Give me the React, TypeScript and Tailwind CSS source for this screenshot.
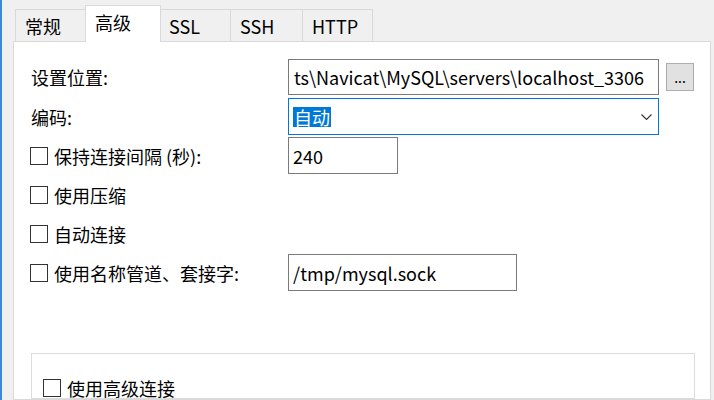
import React from "react";

const Checkbox = () => (
  <span className="inline-block w-[18px] h-[18px] border-[1.5px] border-[#333333] bg-white shrink-0" />
);

const Tab = ({ w, last, children }: { w: string; last?: boolean; children: React.ReactNode }) => (
  <div
    className={`${w} h-[32px] border-l border-t border-[#d9d9d9] ${last ? "border-r" : ""} bg-[#f0f0f0] pl-[9px] flex items-center shrink-0`}
  >
    {children}
  </div>
);

export default function App() {
  return (
    <div className="w-[714px] h-[400px] bg-[#f0f0f0] overflow-hidden border-l-2 border-[#3b8ad8] text-[18px] leading-none text-black font-['Noto_Sans_CJK_SC','Noto_Sans',sans-serif] flex flex-col">
      <div className="flex items-end h-[41px] pl-[13px] shrink-0">
        <Tab w="w-[70px]">常规</Tab>
        <div className="relative z-10 -mb-px w-[76px] h-[37px] bg-white border-x border-t border-[#d9d9d9] pl-[9px] pb-[4px] flex items-center shrink-0">
          高级
        </div>
        <div className="w-[69px] h-[32px] border-t border-[#d9d9d9] bg-[#f0f0f0] pl-[8px] flex items-center shrink-0">SSL</div>
        <Tab w="w-[72px]">SSH</Tab>
        <Tab w="w-[71px]" last>
          HTTP
        </Tab>
      </div>
      <div className="ml-[11px] w-[698px] flex-1 bg-white border border-[#d9d9d9] pt-[17px] pl-[17px] flex flex-col">
        {/* Row 1 */}
        <div className="flex items-center h-[36px]">
          <div className="w-[257px]">设置位置:</div>
          <div className="w-[371px] h-[36px] border border-[#7a7a7a] pl-[5px] flex items-center overflow-hidden whitespace-nowrap">
            {"ts\\Navicat\\MySQL\\servers\\localhost_3306"}
          </div>
          <div className="ml-[7px] w-[28px] h-[28px] bg-[#e1e1e1] border border-[#adadad] flex items-end justify-center pb-[6px] text-[14px]">
            ...
          </div>
        </div>
        {/* Row 2 */}
        <div className="flex items-center h-[37px] mt-[3px]">
          <div className="w-[257px]">编码:</div>
          <div className="w-[371px] h-[37px] border border-[#0078d7] pl-[4px] pr-[6px] flex items-center justify-between">
            <span className="bg-[#0078d7] text-white h-[20px] px-[1px] flex items-center">自动</span>
            <svg width="11" height="6" viewBox="0 0 11 6" className="shrink-0">
              <polyline points="0.5,0.5 5.5,5.5 10.5,0.5" fill="none" stroke="#333" strokeWidth="1.1" />
            </svg>
          </div>
        </div>
        {/* Row 3 */}
        <div className="flex items-center h-[37px] mt-[2px]">
          <div className="w-[257px] flex items-center gap-[6px] -ml-px">
            <Checkbox />
            <span>保持连接间隔 (秒):</span>
          </div>
          <div className="ml-px w-[110px] h-[37px] border border-[#7a7a7a] pl-[4px] flex items-center">240</div>
        </div>
        {/* Row 4 */}
        <div className="flex items-center h-[38px] mt-[2px]">
          <div className="flex items-center gap-[6px] -ml-px">
            <Checkbox />
            <span>使用压缩</span>
          </div>
        </div>
        {/* Row 5 */}
        <div className="flex items-center h-[38px] mt-[1px]">
          <div className="flex items-center gap-[6px] -ml-px">
            <Checkbox />
            <span>自动连接</span>
          </div>
        </div>
        {/* Row 6 */}
        <div className="flex items-center h-[37px] mt-[1px]">
          <div className="w-[257px] flex items-center gap-[6px] -ml-px">
            <Checkbox />
            <span>使用名称管道、套接字:</span>
          </div>
          <div className="ml-px w-[229px] h-[37px] border border-[#7a7a7a] pl-[4px] flex items-center">/tmp/mysql.sock</div>
        </div>
        {/* Group box */}
        <div className="mt-[62px] w-[664px] flex-1 border border-[#dcdcdc] pl-[11px] pt-[25px]">
          <div className="flex items-center gap-[6px]">
            <Checkbox />
            <span>使用高级连接</span>
          </div>
        </div>
      </div>
    </div>
  );
}
